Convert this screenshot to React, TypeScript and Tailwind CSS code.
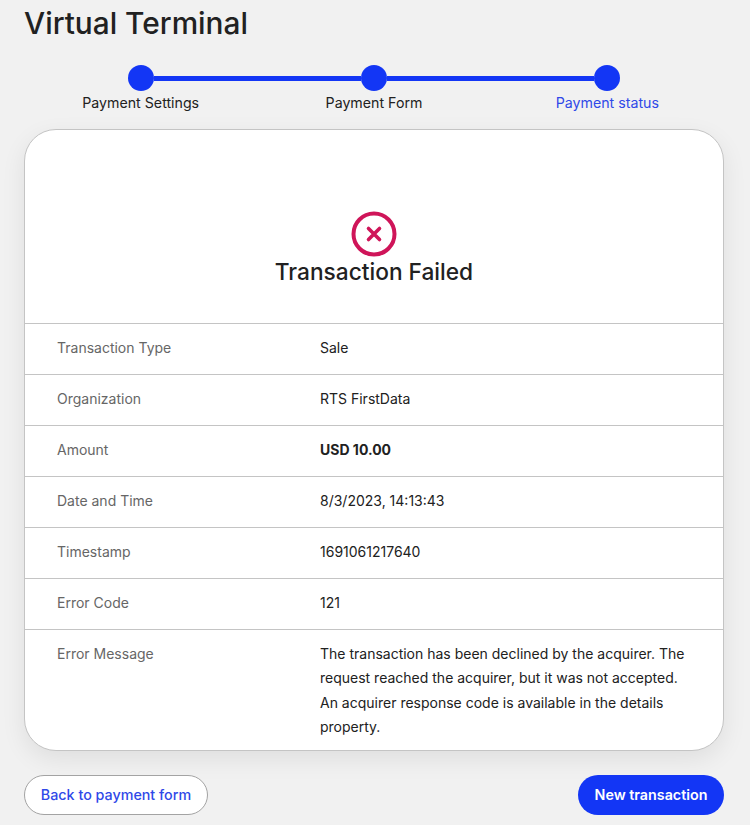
const steps = [
  { label: "Payment Settings", active: false },
  { label: "Payment Form", active: false },
  { label: "Payment status", active: true },
];

const rows = [
  { label: "Transaction Type", value: "Sale" },
  { label: "Organization", value: "RTS FirstData" },
  { label: "Amount", value: "USD 10.00", bold: true },
  { label: "Date and Time", value: "8/3/2023, 14:13:43" },
  { label: "Timestamp", value: "1691061217640" },
  { label: "Error Code", value: "121" },
  {
    label: "Error Message",
    value:
      "The transaction has been declined by the acquirer. The request reached the acquirer, but it was not accepted. An acquirer response code is available in the details property.",
  },
];

const Circle = () => <div className="w-[26px] h-[26px] rounded-full bg-[#1336f5] shrink-0" />;
const Line = () => <div className="flex-1 h-[5px] bg-[#1336f5]" />;

const App = () => {
  return (
    <div className="w-[750px] h-[825px] overflow-hidden bg-[#f1f1f1] pl-6 pr-[26px] text-[#212121] font-['Inter',sans-serif]">
      <h1 className="text-[29.8px] leading-[34px] pt-[6px] font-medium">Virtual Terminal</h1>

      {/* Stepper */}
      <section className="mt-[25px]">
        <div className="flex items-center px-[104px]">
          <Circle />
          <Line />
          <Circle />
          <Line />
          <Circle />
        </div>
        <div className="grid grid-cols-3 mt-[2px]">
          {steps.map((s) => (
            <p
              key={s.label}
              className={`text-center text-[14.2px] leading-[20px] ${s.active ? "text-[#2f49e8]" : "text-[#212121]"}`}
            >
              {s.label}
            </p>
          ))}
        </div>
      </section>

      {/* Result card */}
      <section className="mt-4 w-[700px] h-[622px] rounded-[32px] bg-white border border-[#c4c4c4] shadow-[0_8px_24px_rgba(0,0,0,0.08)] overflow-hidden">
        <div className="h-[193px] flex flex-col items-center pt-[81px]">
          <svg width="46" height="46" viewBox="0 0 46 46" fill="none">
            <circle cx="23" cy="23" r="20.5" stroke="#cf1559" strokeWidth="4" />
            <path d="M17.5 17.5L28.5 28.5M28.5 17.5L17.5 28.5" stroke="#cf1559" strokeWidth="3.6" strokeLinecap="round" />
          </svg>
          <h2 className="text-[22.7px] leading-[28px] font-medium mt-[1px]">Transaction Failed</h2>
        </div>
        {rows.map((r) => (
          <div key={r.label} className="flex border-t border-[#c4c4c4] px-8 pt-[12px] pb-[13.7px]">
            <div className="w-[263px] shrink-0 text-sm leading-[24.3px] text-[#666666]">{r.label}</div>
            <div className={`text-sm leading-[24.3px] ${r.bold ? "font-bold" : ""}`}>{r.value}</div>
          </div>
        ))}
      </section>

      {/* Actions */}
      <div className="flex justify-between mt-6">
        <button className="h-10 w-[184px] rounded-full border border-[#a3a3a3] bg-white text-[14.3px] font-medium text-[#2f49e8]">
          Back to payment form
        </button>
        <button className="h-10 w-[146px] rounded-full bg-[#1336f5] text-[14.3px] font-semibold text-white">
          New transaction
        </button>
      </div>
    </div>
  );
};

export default App;
